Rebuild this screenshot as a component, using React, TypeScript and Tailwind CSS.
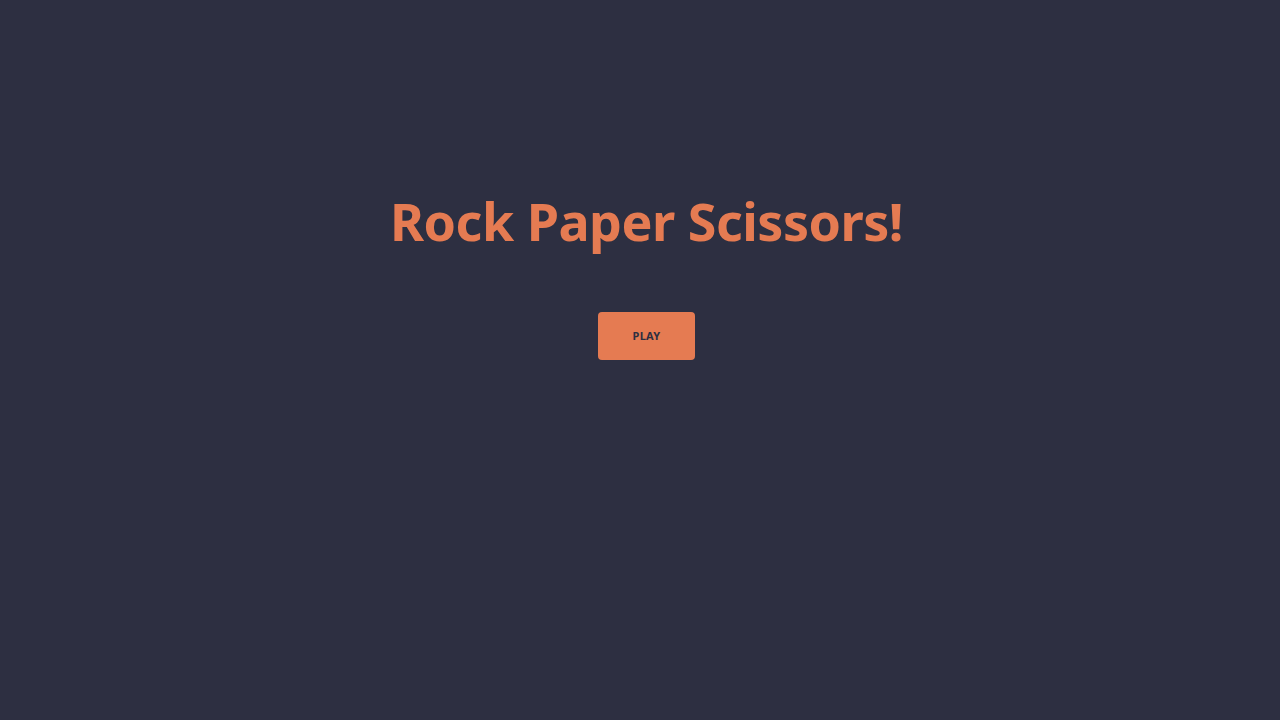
// Start screen for the rock paper scissors game
export default function App() {
  return (
    <div className="min-h-screen w-full bg-[#2d2f41] flex flex-col items-center pt-[190px] pl-[13px] font-['Noto_Sans',sans-serif]">
      <h1 className="text-[52px] leading-[62px] font-bold text-[#e57b52] tracking-[-0.5px]">
        Rock Paper Scissors!
      </h1>

      <button className="mt-[60px] w-[97px] h-[48px] pt-px rounded-[4px] bg-[#e57b52] text-[#2d2f41] text-[11px] font-bold tracking-wide">
        PLAY
      </button>
    </div>
  );
}
